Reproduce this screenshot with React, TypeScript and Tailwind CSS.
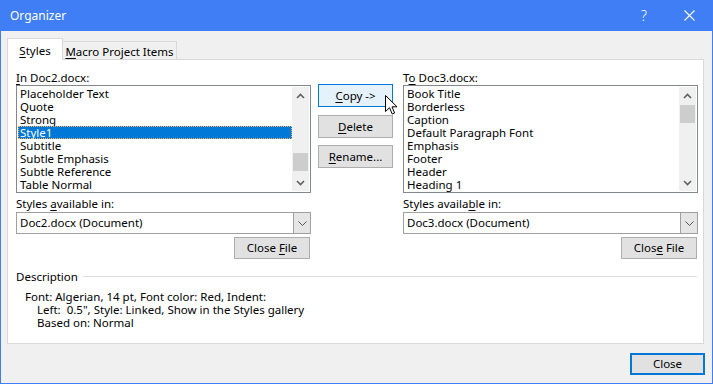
import React from "react";

const Up = () => (
  <svg width="9" height="6" viewBox="0 0 9 6">
    <path d="M1 5 L4.5 1.5 L8 5" fill="none" stroke="#606060" strokeWidth="1.6" />
  </svg>
);
const Down = () => (
  <svg width="9" height="6" viewBox="0 0 9 6">
    <path d="M1 1 L4.5 4.5 L8 1" fill="none" stroke="#606060" strokeWidth="1.6" />
  </svg>
);
const ComboChevron = () => (
  <svg width="9" height="5" viewBox="0 0 9 5">
    <path d="M0.5 0.5 L4.5 4.5 L8.5 0.5" fill="none" stroke="#555" strokeWidth="1" />
  </svg>
);

function ListBox({ items, selected, thumbTop }: { items: string[]; selected?: number; thumbTop: number }) {
  return (
    <div className="h-[108px] border border-[#828790] bg-white p-px flex">
      <div className="flex-1 flex flex-col">
        {items.map((it, i) => (
          <div
            key={it}
            className={
              i === selected
                ? "h-[13px] leading-[11px] pl-[1px] bg-[#0078d7] text-white border border-dotted border-[#f7b35a] whitespace-nowrap"
                : "h-[13px] leading-[13px] pl-[2px] whitespace-nowrap"
            }
          >
            {it}
          </div>
        ))}
      </div>
      <div className="w-[17px] bg-[#f0f0f0] flex flex-col">
        <div className="h-[17px] flex items-center justify-center">
          <Up />
        </div>
        <div className="flex-1 flex flex-col">
          <div style={{ height: thumbTop }} />
          <div className="h-[18px] mx-px bg-[#cdcdcd]" />
        </div>
        <div className="h-[17px] flex items-center justify-center">
          <Down />
        </div>
      </div>
    </div>
  );
}

function Combo({ text }: { text: string }) {
  return (
    <div className="h-[22px] border border-[#a0a0a0] bg-white flex">
      <div className="flex-1 pl-[3px] leading-[20px]">{text}</div>
      <div className="w-[17px] bg-[#e5e5e5] border-l border-[#a0a0a0] flex items-center justify-center">
        <ComboChevron />
      </div>
    </div>
  );
}

export default function App() {
  return (
    <div className="w-[713px] h-[384px] bg-[#f0f0f0] border-x border-b border-[#3f7ef4] flex flex-col relative font-['Noto_Sans',sans-serif] text-[11.5px] text-black overflow-hidden">
      {/* title bar */}
      <div className="h-[31px] bg-[#3f7ef4] flex items-center text-white shrink-0">
        <div className="pl-[9px] text-[12px]">Organizer</div>
        <div className="ml-auto flex items-center h-full">
          <div className="w-[44px] h-full flex items-center justify-center text-[14px] font-light">?</div>
          <div className="w-[46px] h-full flex items-center justify-center">
            <svg width="11" height="11" viewBox="0 0 11 11">
              <path d="M0.5 0.5 L10.5 10.5 M10.5 0.5 L0.5 10.5" stroke="white" strokeWidth="1.1" />
            </svg>
          </div>
        </div>
      </div>

      <div className="px-[6px] pt-[7px] flex flex-col">
        {/* tabs */}
        <div className="flex items-end h-[22px] -mb-px relative z-10">
          <div className="w-[56px] h-[22px] bg-white border border-b-0 border-[#d9d9d9] flex justify-center pt-[3px]">
            <span>
              <span className="underline underline-offset-2">S</span>tyles
            </span>
          </div>
          <div className="w-[114px] h-[19px] bg-[#f0f0f0] border border-l-0 border-[#d9d9d9] flex justify-center pt-[1px]">
            <span>
              <span className="underline underline-offset-2">M</span>acro Project Items
            </span>
          </div>
        </div>

        {/* panel */}
        <div className="w-[697px] h-[285px] border border-[#d9d9d9] bg-white pl-[8px] pr-[5px] pt-[10px] flex flex-col">
          <div className="flex">
            {/* left column */}
            <div className="w-[295px] flex flex-col">
              <div className="h-[15px] leading-[15px]">
                <span className="underline underline-offset-2">I</span>n Doc2.docx:
              </div>
              <ListBox
                items={[
                  "Placeholder Text",
                  "Quote",
                  "Strong",
                  "Style1",
                  "Subtitle",
                  "Subtle Emphasis",
                  "Subtle Reference",
                  "Table Normal",
                ]}
                selected={3}
                thumbTop={49}
              />
              <div className="h-[15px] leading-[15px] mt-[3px]">
                Styles <span className="underline underline-offset-2">a</span>vailable in:
              </div>
              <div className="mt-[1px]">
                <Combo text="Doc2.docx (Document)" />
              </div>
              <div className="flex justify-end mt-[3px] pr-px">
                <div className="w-[76px] h-[22px] bg-[#e1e1e1] border border-[#adadad] flex items-center justify-center">
                  <span>
                    Close <span className="underline underline-offset-2">F</span>ile
                  </span>
                </div>
              </div>
            </div>

            {/* middle buttons */}
            <div className="w-[75px] ml-[7px] flex flex-col mt-[14px]">
              <div className="h-[23px] bg-[#e5f1fb] border border-[#0078d7] flex items-center justify-center">
                <span>
                  <span className="underline underline-offset-2">C</span>opy -&gt;
                </span>
              </div>
              <div className="h-[23px] mt-[8px] bg-[#e1e1e1] border border-[#adadad] flex items-center justify-center">
                <span>
                  <span className="underline underline-offset-2">D</span>elete
                </span>
              </div>
              <div className="h-[23px] mt-[7px] bg-[#e1e1e1] border border-[#adadad] flex items-center justify-center">
                <span>
                  <span className="underline underline-offset-2">R</span>ename...
                </span>
              </div>
            </div>

            {/* right column */}
            <div className="w-[295px] ml-[10px] flex flex-col">
              <div className="h-[15px] leading-[15px]">
                T<span className="underline underline-offset-2">o</span> Doc3.docx:
              </div>
              <ListBox
                items={[
                  "Book Title",
                  "Borderless",
                  "Caption",
                  "Default Paragraph Font",
                  "Emphasis",
                  "Footer",
                  "Header",
                  "Heading 1",
                ]}
                thumbTop={1}
              />
              <div className="h-[15px] leading-[15px] mt-[3px]">
                Styles availa<span className="underline underline-offset-2">b</span>le in:
              </div>
              <div className="mt-[1px]">
                <Combo text="Doc3.docx (Document)" />
              </div>
              <div className="flex justify-end mt-[3px] pr-px">
                <div className="w-[76px] h-[22px] bg-[#e1e1e1] border border-[#adadad] flex items-center justify-center">
                  <span>
                    Clos<span className="underline underline-offset-2">e</span> File
                  </span>
                </div>
              </div>
            </div>
          </div>

          {/* description */}
          <div className="flex items-center h-[15px] mt-[10px]">
            <span className="leading-[15px]">Description</span>
            <div className="flex-1 h-px bg-[#dcdcdc] ml-[5px] mr-px" />
          </div>
          <div className="mt-[6px] leading-[13px]">
            <div className="pl-[9px]">Font: Algerian, 14 pt, Font color: Red, Indent:</div>
            <div className="pl-[21px] whitespace-pre">Left:  0.5", Style: Linked, Show in the Styles gallery</div>
            <div className="pl-[21px]">Based on: Normal</div>
          </div>
        </div>

        {/* bottom */}
        <div className="flex justify-end mt-[9px]">
          <div className="w-[75px] h-[22px] mr-px bg-[#e1e1e1] border-2 border-[#0078d7] flex items-center justify-center">
            Close
          </div>
        </div>
      </div>

      {/* mouse cursor */}
      <svg className="absolute left-[384px] top-[95px]" width="13" height="20" viewBox="0 0 13 20">
        <path
          d="M0.5 0.5 L0.5 16.5 L4.5 12.7 L7.2 19 L9.6 18 L7 11.8 L12 11.8 Z"
          fill="white"
          stroke="black"
          strokeWidth="1"
          strokeLinejoin="miter"
        />
      </svg>
    </div>
  );
}
